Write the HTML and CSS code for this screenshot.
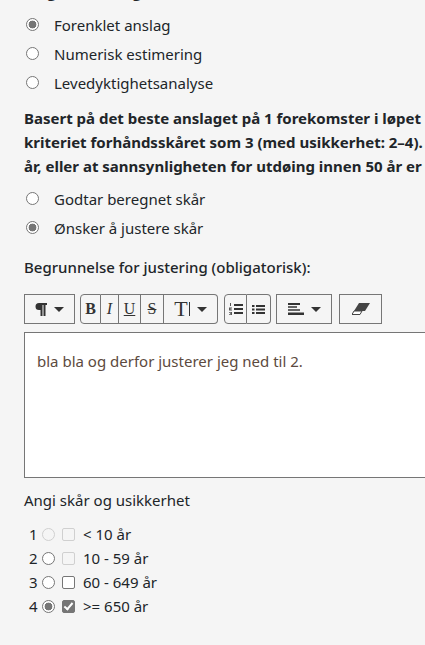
FILE: index.html
```html
<!DOCTYPE html>
<html lang="en">
<head>
    <meta charset="UTF-8">
    <title>Vurdering</title>
    <link rel="stylesheet" href="styles.css">
</head>
<body>

<div class="page">
    <div class="cut-heading">Velg estimeringsmetode</div>

    <div class="radio-list">
        <label class="radio-row"><input type="radio" name="metode" checked> Forenklet anslag</label>
        <label class="radio-row"><input type="radio" name="metode"> Numerisk estimering</label>
        <label class="radio-row"><input type="radio" name="metode"> Levedyktighetsanalyse</label>
    </div>

    <p class="summary">Basert på det beste anslaget på 1 forekomster i løpet<br>kriteriet forhåndsskåret som 3 (med usikkerhet: 2–4).<br>år, eller at sannsynligheten for utdøing innen 50 år er</p>

    <div class="radio-list">
        <label class="radio-row"><input type="radio" name="skar"> Godtar beregnet skår</label>
        <label class="radio-row"><input type="radio" name="skar" checked> Ønsker å justere skår</label>
    </div>

    <div class="editor-label">Begrunnelse for justering (obligatorisk):</div>

    <div class="toolbar">
        <div class="btn btn-para">
            <svg width="12" height="14" viewBox="0 0 12 14"><path d="M4 1h8v2h-1.500v11H8.500V3H7.500v11H5.500V8H4a3.500 3.500 0 0 1 0-7z" fill="#333"/></svg>
            <span class="caret"></span>
        </div>
        <div class="btn-group">
            <div class="btn btn-b">B</div>
            <div class="btn btn-i">I</div>
            <div class="btn btn-u">U</div>
            <div class="btn btn-s">S</div>
            <div class="btn btn-size"><span class="size-t">T</span><span class="size-bar"></span><span class="caret"></span></div>
        </div>
        <div class="btn-group lists">
            <div class="btn btn-list">
                <svg width="14" height="12" viewBox="0 0 14 12"><path d="M5 1h9v2H5zM5 5h9v2H5zM5 9h9v2H5z" fill="#333"/><path d="M1 0h1v3H1zM0 4.500h3v1H1.500v1H3v1H0zM0 9h3v3H0v-.8h2v-.3H1v-.6h1v-.5H0z" fill="#555"/></svg>
            </div>
            <div class="btn btn-list">
                <svg width="13" height="11" viewBox="0 0 13 11"><path d="M0 1h2.500v2H0zM0 4.500h2.500v2H0zM0 8h2.500v2H0zM4 1h9v2H4zM4 4.500h9v2H4zM4 8h9v2H4z" fill="#333"/></svg>
            </div>
        </div>
        <div class="btn btn-align">
            <svg width="16" height="12" viewBox="0 0 16 12"><path d="M0 0h12v2H0zM0 3.300h9v1.500H0zM0 6.300h12v1.500H0zM0 9.600h16V12H0z" fill="#333"/></svg>
            <span class="caret"></span>
        </div>
        <div class="btn btn-erase">
            <svg width="18" height="12" viewBox="0 0 18 12"><path d="M7 0h11l-5 8H2z" fill="#444"/><path d="M2 8h8l-2 3.500H0z" fill="#fff" stroke="#444"/></svg>
        </div>
    </div>

    <div class="editor">bla bla og derfor justerer jeg ned til 2.</div>

    <div class="score-title">Angi skår og usikkerhet</div>

    <div class="score-table">
        <div class="score-row">
            <span class="score-num">1</span>
            <input type="radio" name="score" disabled>
            <input type="checkbox" disabled>
            <span>&lt; 10 år</span>
        </div>
        <div class="score-row">
            <span class="score-num">2</span>
            <input type="radio" name="score">
            <input type="checkbox" disabled>
            <span>10 - 59 år</span>
        </div>
        <div class="score-row">
            <span class="score-num">3</span>
            <input type="radio" name="score">
            <input type="checkbox">
            <span>60 - 649 år</span>
        </div>
        <div class="score-row">
            <span class="score-num">4</span>
            <input type="radio" name="score" checked>
            <input type="checkbox" checked>
            <span>&gt;= 650 år</span>
        </div>
    </div>
</div>

</body>
</html>
```

FILE: styles.css
```css
html, body {
    margin: 0;
    height: 100%;
    overflow: hidden;
}

body {
    background-color: #f5f5f5;
    color: #212529;
    font-family: "Noto Sans", Arial, sans-serif;
    font-size: 15px;
}

.page {
    margin-top: -20px;
    margin-right: -300px;
    padding-left: 24px;
}

.cut-heading {
    font-weight: bold;
    height: 30px;
    line-height: 24px;
}

input[type="radio"],
input[type="checkbox"] {
    appearance: none;
    width: 13px;
    height: 13px;
    margin: 0;
    background-color: #fff;
    border: 1px solid #767676;
    box-sizing: border-box;
}

input[type="radio"] {
    border-radius: 50%;
}

input[type="radio"]:checked {
    border-color: #767676;
    background: radial-gradient(circle, #767676 0, #767676 3.6px, #fff 4.2px);
}

input[type="radio"]:disabled,
input[type="checkbox"]:disabled {
    border-color: #d0d0d0;
    background-color: #f5f5f5;
}

input[type="checkbox"] {
    border-radius: 2px;
}

input[type="checkbox"]:checked {
    background-color: #767676;
    position: relative;
}

input[type="checkbox"]:checked::after {
    content: "";
    position: absolute;
    left: 3px;
    top: 0;
    width: 5px;
    height: 9px;
    border: solid #fff;
    border-width: 0 2px 2px 0;
    transform: rotate(40deg);
    box-sizing: border-box;
}

.radio-row {
    display: flex;
    align-items: center;
    height: 29px;
}

.radio-row input {
    margin-left: 2px;
    margin-right: 15px;
}

.summary {
    margin: 9px 0 6px;
    font-weight: bold;
    line-height: 24px;
    white-space: nowrap;
}

.editor-label {
    margin-top: 14px;
    height: 22px;
    line-height: 22px;
    font-weight: 500;
}

.toolbar {
    display: flex;
    gap: 5px;
    margin-top: 16px;
}

.btn {
    display: flex;
    align-items: center;
    justify-content: center;
    height: 30px;
    box-sizing: border-box;
    border: 1px solid #767676;
    background-color: #f5f5f5;
    color: #333;
}

.btn-group {
    display: flex;
}

.btn-group .btn + .btn {
    border-left: 0;
}

.btn-group .btn:first-child {
    border-radius: 4px 0 0 4px;
}

.btn-group .btn:last-child {
    border-radius: 0 4px 4px 0;
}

.lists {
    margin-left: 1px;
}

.caret {
    display: inline-block;
    width: 0;
    height: 0;
    margin-left: 7px;
    border-left: 5px solid transparent;
    border-right: 5px solid transparent;
    border-top: 5px solid #333;
}

.btn-para {
    width: 51px;
}

.btn-b, .btn-i, .btn-u, .btn-s {
    font-family: "Liberation Serif", serif;
    font-size: 16px;
}

.btn-b {
    width: 21px;
    font-weight: bold;
}

.btn-i {
    width: 18px;
    font-style: italic;
}

.btn-u {
    width: 22px;
    text-decoration: underline;
}

.btn-s {
    width: 23px;
    text-decoration: line-through;
}

.btn-size {
    width: 54px;
}

.size-t {
    font-family: "Liberation Serif", serif;
    font-size: 22px;
}

.size-bar {
    width: 1px;
    height: 14px;
    margin-left: 1px;
    background-color: #333;
}

.btn-list {
    width: 23px;
}

.btn-list + .btn-list {
    width: 24px;
}

.btn-align {
    width: 56px;
}

.btn-erase {
    width: 43px;
    margin-left: 2px;
}

.editor {
    margin-top: 8px;
    height: 146px;
    box-sizing: border-box;
    padding: 18px 12px;
    background-color: #fff;
    border: 1px solid #767676;
    color: #5c4a40;
}

.score-title {
    margin-top: 12px;
    height: 20px;
    line-height: 20px;
}

.score-table {
    margin-top: 12px;
    padding-left: 5px;
}

.score-row {
    display: flex;
    align-items: center;
    height: 24px;
}

.score-num {
    width: 9px;
    margin-right: 4px;
}

.score-row input[type="checkbox"] {
    margin-left: 7px;
    margin-right: 8px;
}
```
